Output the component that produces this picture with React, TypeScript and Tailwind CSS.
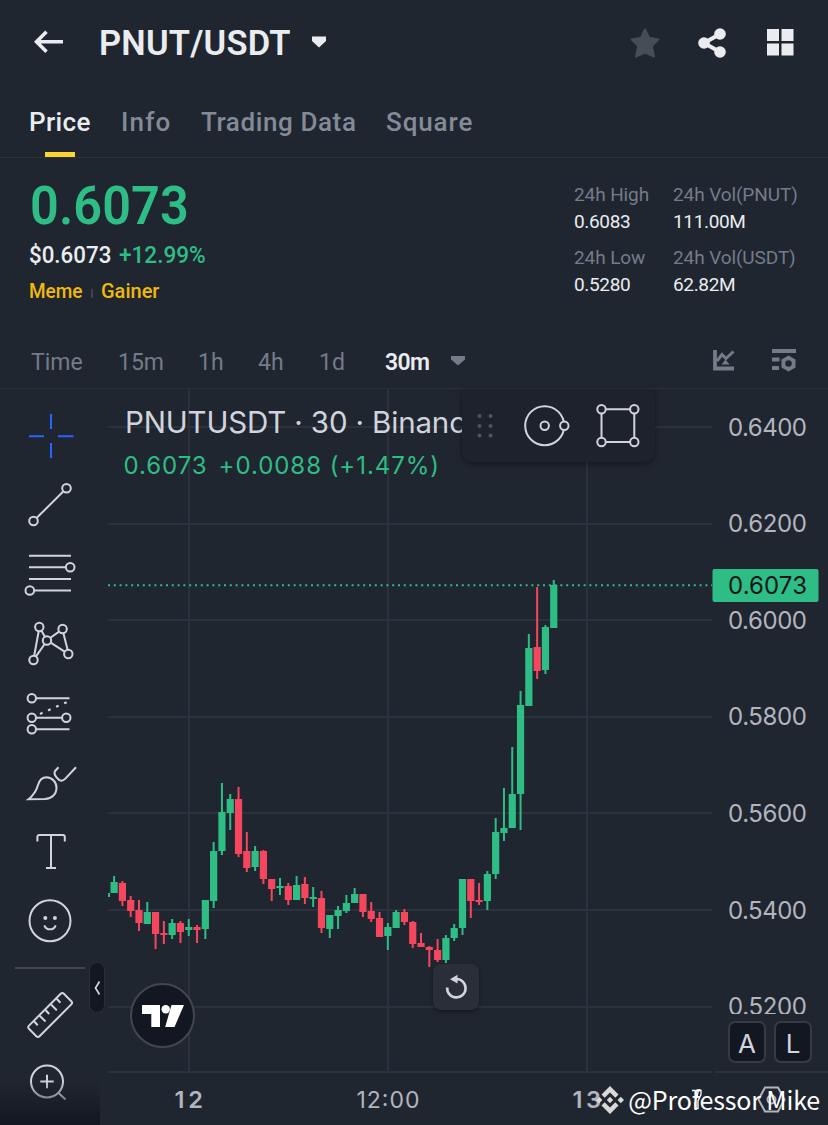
import { type ReactNode } from 'react';

type Candle = [high: number, top: number, bottom: number, low: number, up: 0 | 1];

const candles: Candle[] = [
    [876, 882, 893, 893, 1],
    [881, 883, 901, 906, 0],
    [896, 900, 911, 917, 0],
    [900, 910, 923, 931, 0],
    [902, 912, 924, 924, 1],
    [912, 912, 934, 949, 0],
    [921, 933, 935, 944, 0],
    [919, 923, 935, 939, 1],
    [921, 923, 932, 943, 0],
    [919, 927, 930, 936, 1],
    [925, 927, 930, 943, 0],
    [900, 900, 929, 939, 1],
    [842, 851, 901, 908, 1],
    [783, 812, 851, 855, 1],
    [794, 799, 813, 830, 1],
    [787, 799, 854, 857, 0],
    [832, 851, 868, 872, 0],
    [846, 851, 867, 871, 1],
    [850, 851, 879, 884, 0],
    [879, 879, 889, 901, 0],
    [878, 886, 888, 895, 1],
    [883, 886, 900, 905, 0],
    [876, 885, 900, 900, 1],
    [877, 884, 898, 904, 0],
    [887, 897, 899, 907, 1],
    [891, 898, 928, 933, 0],
    [915, 915, 929, 938, 1],
    [906, 910, 916, 929, 1],
    [895, 903, 911, 913, 1],
    [888, 894, 903, 903, 1],
    [894, 894, 912, 917, 0],
    [902, 911, 919, 922, 0],
    [912, 918, 937, 937, 0],
    [923, 927, 936, 950, 1],
    [910, 912, 928, 928, 1],
    [909, 912, 922, 925, 0],
    [921, 922, 944, 948, 0],
    [933, 943, 947, 947, 0],
    [946, 947, 950, 967, 0],
    [939, 950, 960, 962, 0],
    [935, 938, 960, 963, 1],
    [924, 928, 938, 941, 1],
    [879, 879, 928, 935, 1],
    [879, 879, 901, 918, 0],
    [883, 900, 902, 905, 0],
    [871, 874, 901, 910, 1],
    [818, 832, 874, 879, 1],
    [788, 828, 833, 841, 1],
    [747, 794, 828, 828, 1],
    [691, 705, 794, 830, 1],
    [634, 648, 706, 706, 1],
    [587, 647, 671, 679, 0],
    [625, 627, 670, 674, 1],
    [580, 585, 628, 628, 1],
];

const prices = ['0.6400', '0.6200', '0.6000', '0.5800', '0.5600', '0.5400', '0.5200'];

const tabs = [
    { title: 'Price', className: 'w-[62px] text-[#eaecef] tracking-[0.35px]' },
    { title: 'Info', className: 'w-[50px] tracking-[1.2px]' },
    { title: 'Trading Data', className: 'w-[155px] tracking-[0.6px]' },
    { title: 'Square', className: 'w-[88px] tracking-[0.9px]' },
];

const stats = [
    { label: '24h High', value: '0.6083' },
    { label: '24h Vol(PNUT)', value: '111.00M' },
    { label: '24h Low', value: '0.5280' },
    { label: '24h Vol(USDT)', value: '62.82M' },
];

function Header() {
    return (
        <header className="flex h-[85px] items-center pl-[34px] text-[#eaecef]">
            <svg className="-mt-px h-6 w-[29px]" viewBox="0 0 29 24" fill="none" stroke="currentColor" strokeWidth="3.6">
                <path d="M12.5 1.8 2.5 11.8l10 10M2.5 11.8H29" />
            </svg>
            <h1 className="mt-[3px] ml-[36px] w-[212px] text-[34.500px] font-semibold tracking-[0.2px] whitespace-nowrap">PNUT/USDT</h1>
            <svg className="-mt-px h-3 w-4" viewBox="0 0 16 12" fill="currentColor">
                <path d="M1 .5h14v4.6L8 11.5 1 5.1z" />
            </svg>
            <div className="mr-[34px] ml-auto flex items-center">
                <svg className="mr-[38px] size-[30px]" viewBox="0 0 30 30" fill="#474d57" stroke="#474d57" strokeWidth="2" strokeLinejoin="round">
                    <path d="m15 1.5 4 8.3 9.500 1.600-6.700 6.700 2.200 10.400-9-4-9 4 2.200-10.400-6.700-6.700L11 9.800z" />
                </svg>
                <svg className="mr-[41px] h-[30px] w-7" viewBox="0 0 28 30" fill="currentColor">
                    <path d="M22 6 6 15l16 9" fill="none" stroke="currentColor" strokeWidth="4" />
                    <circle cx="22" cy="6" r="5.800" />
                    <circle cx="6" cy="15" r="5.800" />
                    <circle cx="22" cy="24" r="5.800" />
                </svg>
                <svg className="h-[27px] w-[27px]" viewBox="0 0 27 27" fill="currentColor">
                    <path d="M0 0h12v12H0zM14.500 0h12v12h-12zM0 14.500h12v12H0zM14.500 14.500h12v12h-12z" />
                </svg>
            </div>
        </header>
    );
}

function Tabs() {
    return (
        <nav className="flex h-[73px] gap-[30px] border-b border-[#2b3139] pl-[29px] text-[26px] font-medium text-[#838a98]">
            {tabs.map((tab, i) => (
                <div key={tab.title} className="flex h-full flex-col items-center">
                    <span className={`mt-[18px] leading-[39px] whitespace-nowrap ${tab.className}`}>{tab.title}</span>
                    {i === 0 && <span className="mt-auto h-[5px] w-[30px] bg-[#fcd535]" />}
                </div>
            ))}
        </nav>
    );
}

function Summary() {
    return (
        <section className="flex h-[175px] justify-between pr-[28px] pl-[29px]">
            <div className="flex flex-col">
                <div className="mt-[16px] ml-px origin-left scale-x-[0.925] text-[54.500px] leading-[62px] font-semibold tracking-[0.1px] text-[#2ebd85]">
                    0.6073
                </div>
                <div className="mt-[5px] flex text-[24px] leading-[28px] font-medium">
                    <span className="w-[90px] origin-left scale-x-[0.93] text-[#eaecef]">$0.6073</span>
                    <span className="origin-left scale-x-[0.94] text-[#2ebd85]">+12.99%</span>
                </div>
                <div className="mt-[10px] flex items-center text-[20px] leading-[24px] font-medium text-[#f0b90b]">
                    <span className="w-[62px] origin-left scale-x-[0.95]">Meme</span>
                    <span className="mt-1 mr-[8px] h-[9px] w-[2px] bg-[#3a424d]" />
                    <span>Gainer</span>
                </div>
            </div>
            <div className="mt-[23px] grid w-[226px] grid-cols-[99px_127px] content-start gap-y-[9px] text-[19px]">
                {stats.map((stat) => (
                    <div key={stat.label} className="leading-[27px] whitespace-nowrap">
                        <div className="tracking-[-0.1px] text-[#747b89]">{stat.label}</div>
                        <div className="tracking-[-0.35px] text-[#eaecef]">{stat.value}</div>
                    </div>
                ))}
            </div>
        </section>
    );
}

function Intervals() {
    return (
        <div className="flex h-[56px] items-center border-b border-[#2b3139] pl-[31px] text-[23px] text-[#747b89]">
            <div className="flex pt-[5px]">
                <span className="w-[87px]">Time</span>
                <span className="w-[80px]">15m</span>
                <span className="w-[60px]">1h</span>
                <span className="w-[61px]">4h</span>
                <span className="w-[66px]">1d</span>
                <span className="w-[66px] font-semibold tracking-[-0.6px] text-[#eaecef]">30m</span>
            </div>
            <svg className="h-[10px] w-[14px]" viewBox="0 0 14 10" fill="currentColor">
                <path d="M0 0h14v3.500L7 9.500 0 3.500z" />
            </svg>
            <div className="mr-[32px] ml-auto flex items-center gap-[37px]">
                <svg className="h-[21px] w-[22px]" viewBox="0 0 22 21" fill="none" stroke="currentColor">
                    <path d="M2 0v18.500h19" strokeWidth="3.800" />
                    <path d="m4 11 5-6.500 4 4L20.500 1.500" strokeWidth="3" />
                    <path d="m12.500 9.500 4 5h-8z" fill="currentColor" stroke="none" />
                </svg>
                <svg className="h-[23px] w-6" viewBox="0 0 24 23" fill="currentColor">
                    <path d="M0 0h24v4H0zM0 8.500h7.500v4H0zM0 17h7v4H0z" />
                    <path fillRule="evenodd" d="m16.500 6.500 7 4v8l-7 4-7-4v-8zm0 4.700a3.300 3.300 0 1 0 0 6.600 3.300 3.300 0 0 0 0-6.600" />
                </svg>
            </div>
        </div>
    );
}

function Tool({ children, color = '#d1d4dc' }: { children: ReactNode; color?: string }) {
    return (
        <svg
            className="h-[69px] w-[100px] shrink-0"
            viewBox="0 0 100 69"
            fill="none"
            stroke={color}
            strokeWidth="2"
        >
            {children}
        </svg>
    );
}

function DrawingTools() {
    return (
        <aside className="relative flex h-full w-[100px] shrink-0 flex-col pt-[13px]">
            <Tool color="#2962ff">
                <path d="M51 12v15M51 41v15M29 34.300h15M58 34.300h15.500" />
            </Tool>
            <Tool>
                <circle cx="66.500" cy="17.300" r="4.300" />
                <circle cx="33.500" cy="50" r="4.300" />
                <path d="M63.200 20.500 36.800 46.800" />
            </Tool>
            <Tool>
                <path d="M29 15.700h42M29 27.300h37M29 39h42M34 50.500h37" />
                <circle cx="70.200" cy="27.300" r="4.300" />
                <circle cx="29.800" cy="50.500" r="4.300" />
            </Tool>
            <Tool>
                <circle cx="39.300" cy="18" r="4.200" />
                <circle cx="62.600" cy="20" r="4.200" />
                <circle cx="47" cy="31.500" r="4.200" />
                <circle cx="33.500" cy="51" r="4.200" />
                <circle cx="68.300" cy="45" r="4.200" />
                <path d="M38.700 22.300 34.200 46.700M41.500 21.700l3.400 6.100M36 47.400l8.500-12.200M50.400 28.800l8.700-6.200M50.700 33.700l13.900 9M63.400 24.300l4.200 16.400" />
            </Tool>
            <Tool>
                <circle cx="31.800" cy="20.300" r="4.200" />
                <circle cx="31.800" cy="39.700" r="4.200" />
                <circle cx="66.300" cy="39.700" r="4.200" />
                <circle cx="31.800" cy="51.300" r="4.200" />
                <path d="M36 20.300h33.500M36 39.700h26M36 51.300h33.500" />
                <path d="m40 36 27-12" strokeWidth="2.200" strokeDasharray="2.800 6" />
            </Tool>
            <Tool>
                <path d="M28.500 52.300c5-4 8-9 9.500-14.300C39.500 33 42.500 30.300 46.500 30.300a10.300 10.300 0 0 1 10 10.500c0 6.500-5 11-11.500 11.300z" />
                <path d="m58.500 20.300-3.200 3.400c-1 1.300-1 3-.2 4.600 1 2 2.300 3.300 4 4.600 2 1.300 4.300.8 6-1L76 20.300" />
            </Tool>
            <Tool>
                <path d="M37.400 25.500V21q0-2 2-2h23.400q2 0 2 2v4.500M51 19v33M46 52h10" />
            </Tool>
            <Tool>
                <circle cx="50" cy="35.700" r="20.500" />
                <path d="M44.300 40.300c2 5.400 9.400 5.400 11.400 0" />
                <circle cx="45.300" cy="32.900" r="2" fill="#d1d4dc" stroke="none" />
                <circle cx="54.900" cy="32.900" r="2" fill="#d1d4dc" stroke="none" />
            </Tool>
            <div className="mt-[13px] ml-[15px] h-[2px] w-[70px] shrink-0 bg-[#434651]" />
            <div className="mt-[12px] flex flex-col">
                <Tool>
                    <path d="M60.700 12.800q1.600-1.600 3.200 0l7.400 7.400q1.600 1.600 0 3.200L39.500 55.200q-1.600 1.600-3.200 0L29 47.800q-1.600-1.600 0-3.200z" />
                    <path d="m34 40.300 3.700 4M39.700 34.700l5.800 5.800M45.500 29l3.700 4M51 23.500l5.800 5.800M56.700 17.700l3.700 4" />
                </Tool>
                <Tool>
                    <circle cx="47" cy="31.500" r="16" />
                    <path d="M40.300 31.500h13.400M47 24.800v13.400M58.500 43l7 6.500" />
                </Tool>
            </div>
            <div className="absolute bottom-0 left-0 h-[45px] w-[100px] bg-gradient-to-b from-[#131722]/0 to-[#131722]" />
            <div className="absolute top-[573px] left-[89px] z-10 flex h-[51px] w-4 items-center justify-center rounded-lg border border-[#2a2e39] bg-[#131722]">
                <svg className="h-4 w-2" viewBox="0 0 8 16" fill="none" stroke="#d1d4dc" strokeWidth="1.700">
                    <path d="M6.500 1.500 2.500 8l4 6.500" />
                </svg>
            </div>
        </aside>
    );
}

function PriceChart() {
    return (
        <svg
            className="block h-[736px] w-[728px]"
            viewBox="100 389 728 736"
            fontFamily="Inter, 'Liberation Sans', sans-serif"
            fill="#b2b5be"
        >
            <defs>
                <clipPath id="pane">
                    <rect x="108" y="389" width="720" height="625" />
                </clipPath>
            </defs>
            <g fill="#2c323d">
                {[188, 387, 586].map((x) => (
                    <rect key={x} x={x} y="389" width="2" height="682" />
                ))}
                {prices.map((price, i) => (
                    <rect key={price} x="108" y={Math.round(426 + i * 96.6)} width="604" height="2" />
                ))}
                <rect x="108" y="1071" width="604" height="2" />
                <rect x="714" y="1071" width="114" height="2" />
            </g>
            <g clipPath="url(#pane)" fontSize="24">
                {prices.map((price, i) => (
                    <text key={price} x="728" y={435.5 + i * 96.6} textLength="79">
                        {price}
                    </text>
                ))}
            </g>
            <rect x="108" y="893" width="2" height="4" fill="#2ebd85" />
            {candles.map(([high, top, bottom, low, up], i) => {
                const x = 114.1 + i * 8.295;
                return (
                    <g key={i} fill={up ? '#2ebd85' : '#f6465d'}>
                        <rect x={x - 1} y={high} width="2" height={low - high} />
                        <rect x={x - 3.6} y={top} width="7.2" height={bottom - top} />
                    </g>
                );
            })}
            <path d="M108 585.200h604" stroke="#2ebd85" strokeWidth="2" strokeDasharray="2 3.800" />
            <rect x="712.500" y="569" width="106" height="33" rx="2" fill="#2ebd85" />
            <text x="728" y="594" fontSize="24" fill="#10151c" textLength="79">
                0.6073
            </text>
            <g fontSize="23">
                <text x="174.500" y="1108" fontSize="23.500" fontWeight="600" textLength="28.500">12</text>
                <text x="356.500" y="1108" textLength="63">12:00</text>
                <text x="572.500" y="1108" fontSize="23.500" fontWeight="600" textLength="28.500">13</text>
            </g>
            <g fill="none" stroke="#b2b5be" strokeWidth="2">
                <path d="m765 1087.500-6.500 12 6.500 12h13l6.500-12-6.500-12z" />
                <circle cx="771.500" cy="1099.500" r="4" />
            </g>
        </svg>
    );
}

function Legend() {
    return (
        <div className="absolute top-[13px] left-[24px] w-[338px] whitespace-nowrap">
            <div className="pl-[1px] text-[29.500px] leading-[40px] tracking-[-0.150px] text-[#d1d4dc]">PNUTUSDT · 30 · Binance</div>
            <div className="-ml-[0.5px] flex gap-[11px] pt-[2px] text-[24px] leading-[44px] tracking-[0.950px] text-[#2ebd85]">
                <span>0.6073</span>
                <span>+0.0088 (+1.47%)</span>
            </div>
        </div>
    );
}

function FloatingToolbar() {
    return (
        <div className="absolute top-0 left-[362px] h-[73px] w-[193px] rounded-b-[10px] bg-[#1e222d] shadow-[0_2px_6px_rgba(0,0,0,0.4)]">
            <svg className="size-full" viewBox="462 389 193 73" fill="none" stroke="#d1d4dc" strokeWidth="2">
                <g fill="#50535e" stroke="none">
                    {[416, 426, 435.5].map((y) => (
                        <g key={y}>
                            <circle cx="479.500" cy={y} r="2" />
                            <circle cx="490.500" cy={y} r="2" />
                        </g>
                    ))}
                </g>
                <circle cx="544.700" cy="425.700" r="19.500" />
                <circle cx="544.700" cy="425.700" r="4.200" />
                <circle cx="564.300" cy="425.700" r="4.200" fill="#1e222d" />
                <path d="M601.500 409.300h32.800V442h-32.800z" />
                <g fill="#1e222d">
                    <circle cx="601.500" cy="409.300" r="4.200" />
                    <circle cx="634.300" cy="409.300" r="4.200" />
                    <circle cx="601.500" cy="442" r="4.200" />
                    <circle cx="634.300" cy="442" r="4.200" />
                </g>
            </svg>
        </div>
    );
}

function ScaleButton({ children }: { children: string }) {
    return (
        <button className="flex h-[42px] w-[38px] items-center justify-center rounded-[7px] border-2 border-[#363a45] bg-[#131722] pt-[3px] text-[26px] text-[#d1d4dc]">
            {children}
        </button>
    );
}

function Watermark() {
    return (
        <div className="absolute right-[8px] bottom-[6px] flex h-[38px] items-center text-white">
            <svg className="mr-[4px] h-7 w-7" viewBox="0 0 28 28" fill="#d9d9d9">
                <path d="m14 0 8.500 8.500-3.200 3.200L14 6.400l-5.300 5.300-3.200-3.200zM14 28l-8.500-8.500 3.200-3.200 5.300 5.300 5.300-5.300 3.200 3.200zM14 10.800l3.200 3.200-3.200 3.200-3.200-3.200zM3.200 10.800 6.400 14l-3.200 3.200L0 14zM24.800 10.800 28 14l-3.200 3.200-3.200-3.200z" />
            </svg>
            <span className="-mt-[2px] font-['Noto_Sans_CJK_SC','Noto_Sans',sans-serif] text-[25px] leading-[38px] tracking-[-0.150px] whitespace-nowrap">
                @Professor Mike
            </span>
            <svg className="absolute top-[8px] left-[95px] h-[22px] w-[11px]" viewBox="0 0 11 22" fill="none" stroke="#fff" strokeWidth="1.300">
                <path d="M1 1.500h3l2 6 1.500-6H10v4L7 12v7.500H4V13M4 10l3-2" />
            </svg>
        </div>
    );
}

export default function App() {
    return (
        <div className="flex h-[1125px] w-[828px] flex-col overflow-hidden bg-[#202630] font-[Roboto,sans-serif]">
            <Header />
            <Tabs />
            <Summary />
            <Intervals />
            <main className="relative flex h-[736px]">
                <DrawingTools />
                <div className="relative w-[728px] font-[Inter,sans-serif]">
                    <PriceChart />
                    <Legend />
                    <FloatingToolbar />
                    <div className="absolute top-[594px] left-[30px] flex size-[65px] items-center justify-center rounded-full border-2 border-[#434651] bg-[#131722]">
                        <svg className="h-[22px] w-[42px]" viewBox="0 0 42 22" fill="#fff">
                            <path d="M0 0h18v22H9.300V9H0zM29.500 0H42l-9.500 22H23.200z" />
                            <circle cx="23.700" cy="4.200" r="4.200" />
                        </svg>
                    </div>
                    <div className="absolute top-[575px] left-[333px] flex size-[46px] items-center justify-center rounded-[8px] bg-[#2a2e39] shadow-[0_2px_4px_rgba(0,0,0,0.4)]">
                        <svg className="size-[26px]" viewBox="0 0 26 26" fill="none" stroke="#d1d4dc" strokeWidth="2.600">
                            <path d="M4.200 13.500a9.200 9.200 0 1 0 9.200-8.500" />
                            <path d="M7 5.200 14.500.8v8.800z" fill="#d1d4dc" stroke="none" />
                        </svg>
                    </div>
                    <div className="absolute top-[632px] left-[628px] flex gap-[8px]">
                        <ScaleButton>A</ScaleButton>
                        <ScaleButton>L</ScaleButton>
                    </div>
                </div>
                <Watermark />
            </main>
        </div>
    );
}
